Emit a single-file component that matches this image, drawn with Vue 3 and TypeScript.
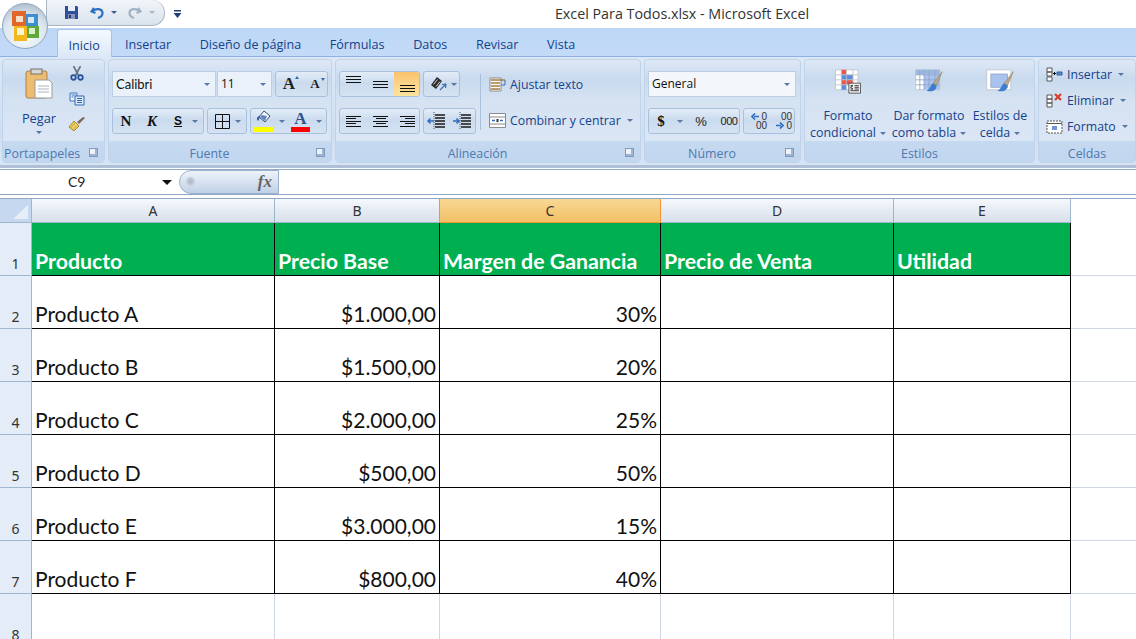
<template>
  <div class="app">
    <div class="office-btn">
      <svg width="34" height="36" viewBox="0 0 34 36">
        <path d="M4 3h14v15H4z" fill="#e2682a" /><path d="M8 8h7v6H8z" fill="#f8e0c8" />
        <path d="M18 6h12v12H18z" fill="#3f8fd0" /><path d="M20 9h6v6h-6z" fill="#d5e8f6" />
        <path d="M6 18h13v15H6z" fill="#f2b91f" /><path d="M9 20h7v7H9z" fill="#fdf3cc" />
        <path d="M19 18h12v12H19z" fill="#5fa83a" /><path d="M21 20h6v6h-6z" fill="#dcf0c8" />
      </svg>
    </div>

    <header class="titlebar">
      <div class="qat">
        <svg class="qi" width="15" height="15" viewBox="0 0 15 15">
          <path d="M1 1h12l1 1v12H1z" fill="#2f4f9e" /><path d="M4 1h7v5H4z" fill="#e8eef8" /><path d="M4 9h7v5H4z" fill="#8c93b8" /><path d="M5 10h2v3H5z" fill="#273a70" />
        </svg>
        <svg class="qi undo" width="15" height="15" viewBox="0 0 15 15">
          <path d="M4 3 1.500 6.500 5.500 8M2.500 6C6 3 12 3.500 12.500 7.500 12.700 10 11 12 8 13" fill="none" stroke="#2c70c0" stroke-width="2.200" />
        </svg>
        <span class="qd" />
        <svg class="qi redo" width="15" height="15" viewBox="0 0 15 15">
          <path d="M11 3l2.500 3.500L9.500 8M12.500 6C9 3 3 3.500 2.500 7.500 2.300 10 4 12 7 13" fill="none" stroke="#9fb2c6" stroke-width="2.200" />
        </svg>
        <span class="qd faded" />
      </div>
      <svg class="qmenu" width="9" height="10" viewBox="0 0 9 10"><path d="M1 1h7v1.500H1zM0.500 4h8L4.500 9z" fill="#1f3f74" /></svg>
      <div class="title">Excel Para Todos.xlsx - Microsoft Excel</div>
    </header>

    <nav class="tabs">
      <span
        v-for="t in tabs"
        :key="t"
        :class="['tab', t === 'Inicio' ? 'active' : '']"
      >{{ t }}</span>
    </nav>

    <section class="ribbon">
      <div class="group g-clip">
        <div class="body clip-body">
          <div class="paste">
            <svg width="30" height="32" viewBox="0 0 30 32">
              <rect x="2" y="3" width="21" height="27" rx="2" fill="#eebc6e" stroke="#a88350" />
              <rect x="7" y="1" width="11" height="5" fill="#d6d6d6" stroke="#77736a" />
              <path d="M11 12h14l3 3v15H11z" fill="#fff" stroke="#9a9a9a" />
              <path d="M14 18h11M14 21h11M14 24h11" stroke="#aab4c2" />
            </svg>
            <span class="big-label">Pegar</span>
            <span class="arrow" />
          </div>
          <div class="clip-small">
            <svg width="14" height="15" viewBox="0 0 14 15"><path d="M3.500 0l5 9.500M10.500 0l-5 9.500" stroke="#6a7482" stroke-width="1.700" /><circle cx="3.500" cy="11.500" r="2.300" fill="#bcd0ea" stroke="#23509c" stroke-width="1.700" /><circle cx="10.500" cy="11.500" r="2.300" fill="#bcd0ea" stroke="#23509c" stroke-width="1.700" /></svg>
            <svg width="16" height="14" viewBox="0 0 16 14"><path d="M1 1h7v8H1z" fill="#e8f0fa" stroke="#3f76bd" /><path d="M6 4h9v9H6z" fill="#dce9f8" stroke="#2f66b0" /><path d="M8 6.500h5M8 8.500h5M8 10.500h5" stroke="#2f66b0" /><path d="M2.500 3h4M2.500 5h2" stroke="#3f76bd" /></svg>
            <svg width="17" height="15" viewBox="0 0 17 15"><path d="M1 10l5-6 5 5-5 5z" fill="#f0d060" stroke="#a8892c" /><path d="M2.500 11 7 6M5 12.500l4-4" stroke="#a8892c" stroke-width=".7" /><path d="M9 5l6-5 2 1-6 6z" fill="#7a6a5e" /></svg>
          </div>
        </div>
        <div class="foot">Portapapeles<span class="launcher" /></div>
      </div>

      <div class="group g-font">
        <div class="body rows">
          <div class="row">
            <div class="combo c-font">Calibri<span class="arrow" /></div>
            <div class="combo c-size">11<span class="arrow" /></div>
            <div class="btns grow">
              <span class="ic serif big">A<i class="tri up" /></span>
              <span class="ic serif small">A<i class="tri" /></span>
            </div>
          </div>
          <div class="row">
            <div class="btns bis">
              <span class="ic serif bold">N</span>
              <span class="ic serif ital">K</span>
              <span class="ic sans under">S</span>
              <span class="arrow" />
            </div>
            <div class="btns borders">
              <svg width="15" height="15" viewBox="0 0 15 15"><path d="M.5.5h14v14H.5zM7.500.5v14M.5 7.500h14" fill="none" stroke="#111" /></svg>
              <span class="arrow" />
            </div>
            <div class="btns colors">
              <span class="swatch">
                <svg width="16" height="14" viewBox="0 0 16 14"><path d="M3 7l5-6 6 5-5 6z" fill="#f6f8fb" stroke="#334f78" /><path d="M6 5l5 1-2 5-5-4z" fill="#5f86bd" /><path d="M3 6c-2 1-3 3-1 5 1-1 2-3 1-5z" fill="#2f5f9f" /></svg>
                <i class="bar yellow" />
              </span>
              <span class="arrow" />
              <span class="swatch">
                <span class="serif fontcolor">A</span>
                <i class="bar red" />
              </span>
              <span class="arrow" />
            </div>
          </div>
        </div>
        <div class="foot launch">Fuente<span class="launcher" /></div>
      </div>

      <div class="group g-align">
        <div class="body align-body">
          <div class="rows">
            <div class="row">
              <div class="btns al3">
                <span v-for="(a, i) in vAligns" :key="i" :class="['al', a, i === 2 ? 'on' : '']"><i /><i /><i /></span>
              </div>
              <div class="btns orient">
                <svg width="20" height="17" viewBox="0 0 20 17"><path d="M2 9l6-8 5 4-6 8z" fill="#2a2a2a" /><path d="M4.500 8.500l4-5M7 10.500l4-5" stroke="#cfd9e6" /><path d="M11 14l6-6M17 8l-4 .5M17 8l-.5 4" stroke="#3e6fb0" fill="none" stroke-width="1.200" /></svg>
                <span class="arrow" />
              </div>
            </div>
            <div class="row">
              <div class="btns al3">
                <span class="al hl"><i /><i class="s" /><i /><i class="s" /><i /></span>
                <span class="al hc"><i /><i class="s" /><i /><i class="s" /><i /></span>
                <span class="al hr"><i /><i class="s" /><i /><i class="s" /><i /></span>
              </div>
              <div class="btns indent">
                <svg v-for="d in [0, 1]" :key="d" width="19" height="18" viewBox="0 0 19 18">
                  <path d="M8 3h10M8 6h10M8 9h10M8 12h10M8 15h10" stroke="#1a1a1a" stroke-width="1.300" />
                  <path d="M7 0v18" stroke="#555" stroke-dasharray="1 1" />
                  <path :d="d ? 'M0 9h6M3.500 6.500 6 9l-2.500 2.500' : 'M1 9h6M3.500 6.500 1 9l2.500 2.500'" stroke="#2f6bbf" fill="none" stroke-width="1.500" />
                </svg>
              </div>
            </div>
          </div>
          <div class="vsep" />
          <div class="wrap-col">
            <div class="lbl-btn">
              <svg width="17" height="15" viewBox="0 0 17 15"><path d="M1 1h11v13H1z" fill="#fff" stroke="#8a8a8a" /><path d="M2 3h12M2 6h9M2 9h9M2 12h9" stroke="#a97b3c" stroke-width="1.300" /><path d="M14 3h2v5h-4" fill="none" stroke="#3c6db0" /></svg>
              Ajustar texto
            </div>
            <div class="lbl-btn">
              <svg width="17" height="15" viewBox="0 0 17 15"><path d="M.5.5h16v14H.5z" fill="#fff" stroke="#8a8a8a" /><path d="M.5 4h16M.5 11h16" stroke="#8a8a8a" /><path d="M3 7.500h3M14 7.500h-3" stroke="#2f6bbf" stroke-width="1.400" /><path d="M7.500 6h2v3h-2z" fill="#333" /></svg>
              Combinar y centrar<span class="arrow" />
            </div>
          </div>
        </div>
        <div class="foot launch">Alineación<span class="launcher" /></div>
      </div>

      <div class="group g-num">
        <div class="body rows">
          <div class="row">
            <div class="combo c-num">General<span class="arrow" /></div>
          </div>
          <div class="row">
            <div class="btns money">
              <span class="ic serif bold dollar">$</span>
              <span class="arrow" />
              <span class="ic sans pct">%</span>
              <span class="ic sans thou">000</span>
            </div>
            <div class="btns decs">
              <span class="dec">
                <span class="dec-line">
                  <svg width="8" height="7" viewBox="0 0 8 7"><path d="M8 3.500H3M4 .5 1 3.500 4 6.500" fill="none" stroke="#2f6bbf" stroke-width="1.600" /></svg>
                  <b>0</b>
                </span>
                <span class="dec-line"><b>00</b></span>
              </span>
              <span class="dec">
                <span class="dec-line"><b>00</b></span>
                <span class="dec-line">
                  <svg width="8" height="7" viewBox="0 0 8 7"><path d="M0 3.500H5M4 .5 7 3.500 4 6.500" fill="none" stroke="#2f6bbf" stroke-width="1.600" /></svg>
                  <b>0</b>
                </span>
              </span>
            </div>
          </div>
        </div>
        <div class="foot launch">Número<span class="launcher" /></div>
      </div>

      <div class="group g-styles">
        <div class="body styles-body">
          <div class="style-btn s1">
            <svg width="32" height="30" viewBox="0 0 32 30">
              <path d="M1 1h27v24H1z" fill="#fff" stroke="#b9c2cc" />
              <path d="M8 1h6v6H8zM8 13h14v6H8z" fill="#ee5445" />
              <path d="M8 7h14v6H8zM8 19h6v6H8z" fill="#5b8bdc" />
              <path d="M1 7h27M1 13h27M1 19h27M8 1v24M14 1v24M22 1v24" stroke="#b9c2cc" fill="none" />
              <path d="M17 17h14v12H17z" fill="#eee" stroke="#444" />
              <path d="M19 20h3l-3 2 3 2h-3M24 20h5M24 22h5M24 24h5M19 26h10" stroke="#222" fill="none" />
            </svg>
            <span>Formato</span>
            <span>condicional<i class="arrow" /></span>
          </div>
          <div class="style-btn s2">
            <svg width="34" height="30" viewBox="0 0 34 30">
              <path d="M1 1h29v24H1z" fill="#fff" stroke="#b9c2cc" />
              <path d="M1 1h29v6H1z" fill="#9db8e0" />
              <path d="M11 7h19v18H11z" fill="#a9c2ee" />
              <path d="M1 7h29M1 13h29M1 19h29M6 1v24M11 1v24M17 1v24M24 1v24" stroke="#8fa6c8" fill="none" />
              <path d="M33 3 22 17l4 3z" fill="#b8a888" stroke="#8f7c5c" stroke-width=".6" />
              <path d="M22 17c-3 1-3 7-8 9 6 2 12 0 12-6z" fill="#3e7cd0" />
            </svg>
            <span>Dar formato</span>
            <span>como tabla<i class="arrow" /></span>
          </div>
          <div class="style-btn s3">
            <svg width="34" height="30" viewBox="0 0 34 30">
              <path d="M1 1h29v24H1z" fill="#fff" stroke="#b9c2cc" />
              <path d="M6 6h20v16H6z" fill="#a9c2ee" stroke="#8fa6c8" />
              <path d="M33 3 22 17l4 3z" fill="#b8a888" stroke="#8f7c5c" stroke-width=".6" />
              <path d="M22 17c-3 1-3 7-8 9 6 2 12 0 12-6z" fill="#3e7cd0" />
            </svg>
            <span>Estilos de</span>
            <span>celda<i class="arrow" /></span>
          </div>
        </div>
        <div class="foot">Estilos</div>
      </div>

      <div class="group g-cells">
        <div class="body cells-body">
          <div class="cell-btn">
            <svg width="17" height="15" viewBox="0 0 17 15"><path d="M1 1h5v4H1zM1 5h5v4H1zM1 10h5v4H1z" fill="#fff" stroke="#555" /><path d="M11 5h5v3h-5z" fill="#5f8fd0" stroke="#2d5c9e" /><path d="M7 6.500h3M8.500 5v3" stroke="#111" /></svg>
            Insertar<span class="arrow" />
          </div>
          <div class="cell-btn">
            <svg width="17" height="15" viewBox="0 0 17 15"><path d="M1 2h5v4H1zM1 6h5v4H1zM1 10h5v4H1z" fill="#fff" stroke="#555" /><path d="M9 1l6 6M15 1L9 7" stroke="#dd3a2a" stroke-width="2.200" /></svg>
            Eliminar<span class="arrow" />
          </div>
          <div class="cell-btn">
            <svg width="17" height="15" viewBox="0 0 17 15"><path d="M1 2h15v12H1z" fill="#fff" stroke="#555" stroke-dasharray="2 1" /><path d="M1 4.500h15" stroke="#555" /><path d="M6 7h5v4H6z" fill="#6d97d8" /></svg>
            Formato<span class="arrow" />
          </div>
        </div>
        <div class="foot">Celdas</div>
      </div>
    </section>

    <div class="formula">
      <div class="namebox">C9<i class="name-arrow" /></div>
      <div class="fx-pill">
        <span class="dot" />
        <em>fx</em>
      </div>
      <div class="fx-input" />
    </div>

    <main class="sheet">
      <div class="corner"><i /></div>
      <div
        v-for="c in columns"
        :key="c"
        :class="['col-h', c === 'C' ? 'sel' : '']"
      >{{ c }}</div>
      <div class="col-h rest" />

      <template v-for="(r, i) in rows" :key="i">
        <div class="row-h">{{ i + 1 }}</div>
        <div
          v-for="(v, j) in r"
          :key="j"
          :class="['cell', i === 0 ? 'head' : '', i < 7 ? 'boxed' : '', (i > 0 && (j === 1 || j === 2)) ? 'num' : '']"
        >{{ v }}</div>
        <div class="cell rest" />
      </template>
    </main>
  </div>
</template>

<script setup lang="ts">
const tabs = [
  "Inicio",
  "Insertar",
  "Diseño de página",
  "Fórmulas",
  "Datos",
  "Revisar",
  "Vista",
];

const vAligns = ["top", "mid", "bot"];

const columns = ["A", "B", "C", "D", "E"];

const rows: string[][] = [
  ["Producto", "Precio Base", "Margen de Ganancia", "Precio de Venta", "Utilidad"],
  ["Producto A", "$1.000,00", "30%", "", ""],
  ["Producto B", "$1.500,00", "20%", "", ""],
  ["Producto C", "$2.000,00", "25%", "", ""],
  ["Producto D", "$500,00", "50%", "", ""],
  ["Producto E", "$3.000,00", "15%", "", ""],
  ["Producto F", "$800,00", "40%", "", ""],
  ["", "", "", "", ""],
];
</script>

<style>
html,
body {
  margin: 0;
  height: 100%;
  overflow: hidden;
  background: #fff;
}
</style>

<style scoped>
.app {
  position: relative;
  width: 1136px;
  height: 639px;
  overflow: hidden;
  font-family: "Open Sans", "Noto Sans", sans-serif;
  color: #15428b;
  background: #fff;
}

.office-btn {
  position: absolute;
  left: 2px;
  top: 3px;
  width: 46px;
  height: 46px;
  z-index: 3;
  display: flex;
  align-items: center;
  justify-content: center;
  border-radius: 50%;
  border: 1px solid #8ea6bf;
  box-sizing: border-box;
  background: radial-gradient(circle at 50% 75%, #f6fafc, #dbe6ee 55%, #aebfd0 85%);
}

.titlebar {
  height: 28px;
  display: flex;
  align-items: center;
  background: #fff;
}

.qat {
  margin-left: 46px;
  width: 119px;
  height: 26px;
  margin-top: -3px;
  box-sizing: border-box;
  display: flex;
  align-items: center;
  padding-left: 17px;
  border: 1px solid #a9b6c4;
  border-top: 0;
  border-radius: 0 14px 14px 0;
  background: linear-gradient(#f2f5f9, #d9e2ec);
}

.qi {
  flex: none;
}

.undo {
  margin-left: 11px;
}

.redo {
  margin-left: 10px;
}

.qd {
  margin-left: 6px;
  border: 3px solid transparent;
  border-top: 3px solid #3f5f8f;
  border-bottom: 0;
}

.qd.faded {
  border-top-color: #aab6c4;
  margin-left: 7px;
}

.qmenu {
  margin-left: 8px;
}

.title {
  position: absolute;
  left: 228px;
  right: 0;
  top: 5px;
  text-align: center;
  font-size: 14.300px;
  line-height: 18px;
  color: #333;
}

.tabs {
  height: 29px;
  box-sizing: border-box;
  padding-left: 57px;
  display: flex;
  align-items: flex-end;
  background: linear-gradient(#bcd7f6, #c4dbf7);
  border-bottom: 1px solid #8db2e3;
  font-size: 12.600px;
}

.tab {
  height: 27px;
  line-height: 31px;
  padding: 0 14.300px;
  color: #15428b;
  white-space: nowrap;
}

.tab.active {
  padding: 0 11.500px 0 10.500px;
  height: 28px;
  margin-bottom: -1px;
  margin-right: -1.500px;
  box-sizing: border-box;
  border: 1px solid #a5c3e8;
  border-bottom: 0;
  border-radius: 3px 3px 0 0;
  background: linear-gradient(#f4f9fe, #dbe8f7);
}

.ribbon {
  height: 111px;
  box-sizing: border-box;
  padding: 2px 0 2px 2px;
  display: flex;
  gap: 3px;
  background: linear-gradient(#dbe7f6, #cfdff2 70%, #d6e5f6);
  border-bottom: 3px solid #aebfd6;
}

.group {
  flex: none;
  display: flex;
  flex-direction: column;
  box-sizing: border-box;
  border: 1px solid #c0d3e9;
  border-radius: 4px;
  background: linear-gradient(#dfe9f6, #c9daee 18%, #d5e2f2 40%, #dde8f6);
  overflow: hidden;
}

.g-clip { width: 103px; }
.g-font { width: 224px; }
.g-align { width: 306px; }
.g-num { width: 157px; }
.g-styles { width: 231px; }
.g-cells { width: 98px; }

.body {
  flex: 1;
  min-height: 0;
  box-sizing: border-box;
}

.foot {
  position: relative;
  flex: none;
  height: 21px;
  line-height: 26px;
  text-align: center;
  font-size: 12.400px;
  color: #4e79b0;
  background: linear-gradient(#c5d9f0, #c1d6ef);
}

.foot.launch {
  padding-right: 21px;
}

.launcher {
  position: absolute;
  right: 6px;
  top: 7px;
  width: 7px;
  height: 7px;
  border: 1px solid #7f9bbf;
  background: #eef3f9;
  box-shadow: inset -2px -2px 0 #9fb4d0;
}

.g-clip .foot {
  text-align: left;
  padding-left: 1px;
  font-size: 12.400px;
}

.rows {
  display: flex;
  flex-direction: column;
  gap: 11px;
  padding: 11px 0 0 3px;
}

.row {
  display: flex;
  gap: 3px;
  height: 26px;
}

.arrow {
  display: inline-block;
  flex: none;
  width: 0;
  height: 0;
  border: 3px solid transparent;
  border-top: 3px solid #5877a3;
  border-bottom: 0;
}

.clip-body {
  display: flex;
}

.paste {
  width: 72px;
  padding-top: 8px;
  display: flex;
  flex-direction: column;
  align-items: center;
  box-sizing: border-box;
}

.big-label {
  margin-top: 10px;
  font-size: 12.800px;
  line-height: 17px;
}

.paste .arrow {
  margin-top: 4px;
}

.clip-small {
  margin-left: -7px;
  display: flex;
  flex-direction: column;
  align-items: center;
  gap: 11px;
  padding: 6px 0 0 0;
}

.combo {
  position: relative;
  box-sizing: border-box;
  height: 26px;
  line-height: 24px;
  padding-left: 3px;
  font-size: 12px;
  color: #111;
  border: 1px solid #bccee4;
  background: #eaf1fa;
}

.combo .arrow {
  position: absolute;
  right: 5px;
  top: 11px;
}

.c-font { width: 104px; margin-right: -2px; font-family: "Lato", sans-serif; font-size: 13px; }
.c-size { width: 55px; }
.c-num { width: 148px; background: #f3f7fc; font-size: 12px; margin-left: 0; }

.btns {
  display: flex;
  align-items: center;
  box-sizing: border-box;
  height: 26px;
  border: 1px solid #a9c0dd;
  border-radius: 3px;
  background: linear-gradient(#e3edf8, #cbdbee 45%, #d4e2f2);
}

.ic {
  flex: none;
  text-align: center;
  color: #111;
}

.serif {
  font-family: "Liberation Serif", serif;
}

.sans {
  font-family: "Liberation Sans", sans-serif;
}

.grow {
  width: 53px;
}

.ic.big {
  position: relative;
  width: 26px;
  font-size: 17px;
  font-weight: 700;
  color: #222;
}

.ic.small {
  position: relative;
  width: 26px;
  font-size: 13px;
  font-weight: 700;
  color: #222;
}

.tri {
  position: absolute;
  right: 3px;
  top: 2px;
  border: 2.500px solid transparent;
  border-top: 3px solid #3569a8;
  border-bottom: 0;
}

.tri.up {
  border-top: 0;
  border-bottom: 3px solid #3569a8;
}

.bis {
  width: 92px;
}

.bis .ic {
  width: 26px;
  font-size: 15px;
  font-weight: 700;
}

.bold {
  font-weight: 700;
}

.ital {
  font-style: italic;
  font-weight: 700;
}

.bis .under {
  font-size: 12px;
  text-decoration: underline;
}

.bis .arrow {
  margin-left: 1px;
}

.borders {
  width: 40px;
  padding-left: 7px;
  gap: 5px;
}

.colors {
  width: 77px;
  padding-left: 1px;
}

.swatch {
  position: relative;
  width: 24px;
  height: 22px;
  display: flex;
  justify-content: center;
}

.colors .arrow {
  margin: 0 4px;
}

.bar {
  position: absolute;
  left: 2px;
  right: 2px;
  bottom: 0;
  height: 5px;
}

.yellow { background: #ffff00; }
.red { background: #ff0000; }

.fontcolor {
  font-size: 17px;
  font-weight: 700;
  line-height: 18px;
  color: #2f4f8f;
}

.align-body {
  display: flex;
}

.al3 {
  width: 81px;
  overflow: hidden;
}

.al {
  flex: none;
  width: 27px;
  height: 100%;
  box-sizing: border-box;
  padding: 4px 6px;
  display: flex;
  flex-direction: column;
  gap: 2px;
}

.al i {
  display: block;
  height: 1px;
  background: #111;
}

.al.mid {
  justify-content: center;
}

.al.bot {
  justify-content: flex-end;
}

.al.on {
  background: linear-gradient(#f9c26a, #fcd48a 50%, #fde39c);
}

.al.hl, .al.hc, .al.hr {
  padding-top: 0;
  padding-bottom: 0;
  gap: 1.500px;
  justify-content: center;
}

.al .s {
  width: 10px;
}

.al.hc .s {
  margin: 0 auto;
}

.al.hr .s {
  margin-left: auto;
}

.orient {
  width: 37px;
  padding-left: 5px;
  gap: 2px;
}

.indent {
  width: 53px;
  justify-content: space-around;
}

.vsep {
  width: 1px;
  height: 56px;
  margin: 14px 0 0 4px;
  background: #a9c0dd;
}

.wrap-col {
  margin-left: 8px;
  padding-top: 15px;
  display: flex;
  flex-direction: column;
  gap: 17px;
}

.lbl-btn,
.cell-btn {
  display: flex;
  align-items: center;
  gap: 4px;
  height: 19px;
  font-size: 12.300px;
  white-space: nowrap;
}

.lbl-btn .arrow {
  margin-left: 2px;
}

.money {
  width: 92px;
}

.dollar {
  width: 24px;
  font-size: 15px;
}

.pct {
  width: 30px;
  margin-left: 3px;
  font-size: 13px;
  color: #222;
}

.thou {
  width: 26px;
  font-size: 11px;
  letter-spacing: -0.5px;
  color: #222;
}

.money .arrow {
  margin-left: 4px;
}

.decs {
  width: 52px;
  padding: 0 2px;
  justify-content: space-between;
}

.dec {
  width: 21px;
  display: flex;
  flex-direction: column;
  font-family: "Liberation Sans", sans-serif;
  font-size: 10px;
  line-height: 9px;
  color: #333;
}

.dec-line {
  display: flex;
  align-items: center;
  justify-content: flex-end;
  gap: 2px;
}

.dec b {
  font-weight: 400;
}

.styles-body {
  display: flex;
  padding: 9px 0 0 3px;
}

.style-btn {
  flex: none;
  display: flex;
  flex-direction: column;
  align-items: center;
  font-size: 12.400px;
  line-height: 17px;
  white-space: nowrap;
}

.style-btn svg {
  margin-bottom: 13px;
}

.style-btn .arrow {
  margin-left: 4px;
  vertical-align: middle;
}

.s1 { width: 80px; }
.s2 { width: 82px; }
.s3 { width: 60px; }

.cells-body {
  display: flex;
  flex-direction: column;
  gap: 7px;
  padding: 5px 0 0 7px;
}

.cell-btn .arrow {
  margin-left: 2px;
}

.formula {
  height: 26px;
  margin-top: 1px;
  display: flex;
  box-sizing: border-box;
  border-top: 1px solid #8fa8c6;
  border-bottom: 1px solid #8fa8c6;
}

.namebox {
  position: relative;
  width: 179px;
  padding-left: 68px;
  box-sizing: border-box;
  line-height: 24px;
  font-size: 14px;
  font-family: "Lato", sans-serif;
  color: #222;
}

.name-arrow {
  position: absolute;
  left: 162px;
  top: 10px;
  border: 5px solid transparent;
  border-top: 5px solid #111;
  border-bottom: 0;
}

.fx-pill {
  position: relative;
  width: 100px;
  height: 100%;
  box-sizing: border-box;
  border: 1px solid #9cb2cc;
  border-radius: 12px 0 0 12px;
  background: linear-gradient(#eef3fa, #c0d0e6);
}

.fx-pill .dot {
  position: absolute;
  left: 6px;
  top: 6px;
  width: 9px;
  height: 9px;
  border-radius: 50%;
  background: radial-gradient(#aab6c4, #d8e0ea);
}

.fx-pill em {
  position: absolute;
  right: 6px;
  top: 0;
  font-family: "Liberation Serif", serif;
  font-size: 17px;
  font-weight: 700;
  line-height: 22px;
  color: #666;
}

.fx-input {
  flex: 1;
}

.sheet {
  margin-top: 3px;
  display: grid;
  grid-template-columns: 32px 243px 165px 221px 233px 177px 66px;
  grid-template-rows: 24px repeat(8, 53px);
  border-top: 1px solid #8fa8c6;
  font-family: "Lato", sans-serif;
}

.corner {
  position: relative;
  background: #c5d8ef;
  border-right: 1px solid #9eb6ce;
  border-bottom: 1px solid #9eb6ce;
  box-sizing: border-box;
}

.corner i {
  position: absolute;
  right: 3px;
  bottom: 3px;
  border-left: 15px solid transparent;
  border-bottom: 14px solid #e6eef8;
}

.col-h {
  box-sizing: border-box;
  text-align: center;
  line-height: 23px;
  font-size: 14px;
  font-family: "Noto Sans", sans-serif;
  color: #333;
  background: linear-gradient(#f6f9fc, #e6ebf3 50%, #d9e0ea);
  border-right: 1px solid #9eb6ce;
  border-bottom: 1px solid #9eb6ce;
}

.col-h.sel {
  background: linear-gradient(#f8d893, #f2c067);
  border-right: 1px solid #f29536;
  border-left: 1px solid #f29536;
  border-bottom: 1px solid #f29536;
  margin-left: -1px;
}

.col-h.rest {
  background: #fff;
  border: 0;
}

.row-h {
  box-sizing: border-box;
  display: flex;
  align-items: flex-end;
  justify-content: center;
  padding-bottom: 3px;
  font-size: 14px;
  font-family: "Noto Sans", sans-serif;
  line-height: 17px;
  color: #333;
  background: #e4ecf7;
  border-right: 1px solid #9eb6ce;
  border-bottom: 1px solid #9eb6ce;
}

.cell {
  box-sizing: border-box;
  display: flex;
  align-items: flex-end;
  padding: 0 3px;
  font-size: 21px;
  line-height: 29px;
  color: #111;
  white-space: nowrap;
  border-right: 1px solid #d0d7e5;
  border-bottom: 1px solid #d0d7e5;
}

.cell.boxed {
  border-right-color: #000;
  border-bottom-color: #000;
}

.cell.head {
  background: #00b050;
  color: #fff;
  font-weight: 700;
  font-size: 21.300px;
  line-height: 27px;
}

.cell.num {
  justify-content: flex-end;
}

.cell.rest {
  border-right: 0;
}
</style>
